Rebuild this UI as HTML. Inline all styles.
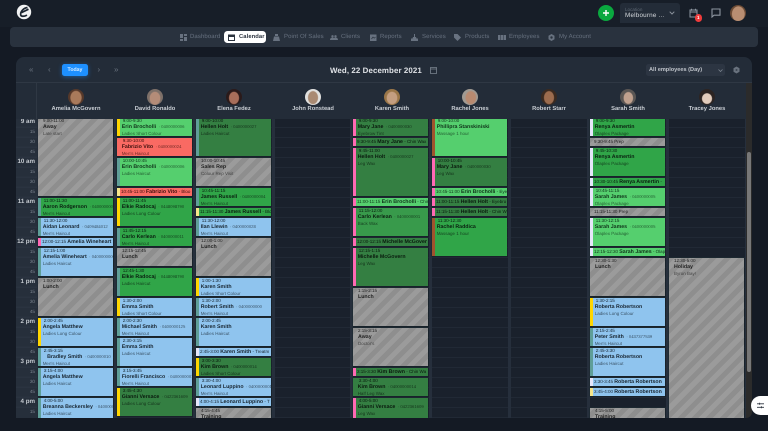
<!DOCTYPE html>
<html><head><meta charset="utf-8"><style>
*{box-sizing:border-box;margin:0;padding:0}
html,body{width:768px;height:431px;overflow:hidden;background:#141a24;font-family:"Liberation Sans",sans-serif;text-rendering:geometricPrecision}
.a{position:absolute}
#top{left:0;top:0;width:768px;height:27px;background:#171e28}
#nav{left:10px;top:27px;width:748px;height:19.5px;background:#29323e;border-radius:4px}
.n{position:absolute;top:33.5px;font-size:6px;line-height:7px;color:#687280;white-space:nowrap;letter-spacing:.1px}
.ni{position:absolute;top:33.5px;width:7px;height:7px}
#panel{left:16px;top:57px;width:736px;height:360.5px;background:#232c38;border-radius:8px;overflow:hidden}
.nm{position:absolute;top:106px;width:76px;text-align:center;font-size:5.8px;line-height:6px;font-weight:bold;color:#c9ced4;white-space:nowrap}
.av{position:absolute;top:89px;width:16px;height:16px;border-radius:50%}
.ar{position:absolute;top:65px;font-size:8px;line-height:9px;color:#69727e}
#grid{left:38px;top:119px;width:708px;height:298.5px;overflow:hidden;background:#262f3c}
.c{position:absolute;top:-1.3px;width:75.5px;height:320px;background:repeating-linear-gradient(to bottom,#1a212c 0 9px,#212935 9px 10px)}
.e{position:absolute;left:0;width:75px;overflow:hidden;white-space:nowrap;box-shadow:0 0 0 .6px rgba(20,40,40,.55);color:#15202a;font-size:4.5px;line-height:6.4px;padding-left:1.7px;text-indent:1px;border-left:3.3px solid #5f9e98}
.e b{display:block;font-size:5.25px;text-indent:0}
.e span{display:block;opacity:.72;text-indent:0}
.e s{text-decoration:none;font-weight:normal;font-size:4.2px;opacity:.75;margin-left:1px}
.e.i{line-height:8px;padding-left:1px;text-indent:0}
.e.i b{display:inline}
.e.i span{display:inline}
.L{background:#55cf6e;color:#10331a}.M{background:#30a548;color:#0a1f10}.D{background:#347f42;color:#0a1a0e}
.B{background:#8fc4ee;color:#182530}.R{background:#f96a63;color:#3a0f0c}
.G{background:repeating-linear-gradient(-45deg,#9b9b9b 0 5px,#8e8e8e 5px 10px);color:#222;border-left:0;padding-left:5px;text-indent:0}
.y{border-left-color:#ffd600}.p{border-left-color:#ff69b4}.q{border-left-color:#f5e58a}.v{border-left-color:#e6e6fa}.o{border-left-color:#a0522d}
.tm{position:absolute;right:717px;font-size:4.6px;line-height:8px;color:#7d8691;white-space:nowrap}
.tm.h{font-size:6.2px;font-weight:bold;color:#c4c9cf;right:717px}
#tc{left:16px;top:119px;width:21px;height:298.5px;background:repeating-linear-gradient(to bottom,#262f3b 0 9px,#2c3542 9px 10px);background-position:0 -1.3px}
</style></head><body>
<div class="a" id="top"></div>
<svg class="a" style="left:16px;top:4px" width="16" height="16" viewBox="0 0 16 16"><circle cx="8" cy="8" r="7.2" fill="#f2f3f4"/><path d="M11.5 3.5C7.5 4 4.5 7.5 4.6 10.5c.1 2.2 3 2.3 6.4.6M5.5 8.6l7-3.4" fill="none" stroke="#1c2530" stroke-width="1.7"/></svg>

<div class="a" style="left:598px;top:5px;width:16px;height:16px;border-radius:50%;background:#0aa83f"></div>
<svg class="a" style="left:602px;top:9px" width="8" height="8" viewBox="0 0 8 8"><path d="M4 1v6M1 4h6" stroke="#fff" stroke-width="1.4"/></svg>
<div class="a" style="left:620px;top:3px;width:60px;height:20px;background:#232c38;border-radius:3px 3px 0 0"></div>
<div class="a" style="left:625px;top:7px;font-size:4.6px;line-height:5px;color:#5f6975">Location</div>
<div class="a" style="left:625px;top:12px;font-size:6.3px;line-height:8px;color:#d4d8dc;white-space:nowrap;letter-spacing:.2px">Melbourne ...</div>
<svg class="a" style="left:669px;top:11px" width="6" height="4" viewBox="0 0 6 4"><path d="M.7.7 3 3 5.3.7" fill="none" stroke="#8a929c" stroke-width="1"/></svg>
<svg class="a" style="left:689px;top:8px" width="9" height="10" viewBox="0 0 9 10"><path d="M1 2h7v7H1zM1 4h7M2.5 .8v2M6.5 .8v2" fill="none" stroke="#8d95a0" stroke-width="1"/></svg>
<div class="a" style="left:694.5px;top:14px;width:7.5px;height:7.5px;border-radius:50%;background:#ef3b3b;color:#fff;font-size:4.5px;line-height:7.5px;text-align:center;font-weight:bold">1</div>
<svg class="a" style="left:711px;top:8px" width="10" height="10" viewBox="0 0 10 10"><path d="M1 1h8v6.2H3L1 9z" fill="none" stroke="#8d95a0" stroke-width="1.1"/></svg>
<div class="a" style="left:730px;top:5px;width:16px;height:16px;border-radius:50%;background:radial-gradient(ellipse 42% 50% at 52% 56%,#b98e72 0 90%,#6b4a34 100%)"></div>

<div class="a" id="nav"></div>
<div class="a" style="left:224px;top:30.5px;width:42px;height:12.5px;background:#fff;border-radius:3.5px"></div>

<svg class="ni" style="left:180px" viewBox="0 0 7 7"><path d="M0 0h3v4H0zM4 0h3v2H4zM4 3h3v4H4zM0 5h3v2H0z" fill="#687280"/></svg><div class="n" style="left:190px">Dashboard</div>
<svg class="ni" style="left:228px" viewBox="0 0 7 7"><path d="M.5 1h6v5.500h-6z" fill="none" stroke="#2a323d"/><path d="M.5 1h6v2h-6z" fill="#2a323d"/></svg><div class="n" style="left:239px;color:#2c3440;font-weight:bold;font-size:5.800px">Calendar</div>
<svg class="ni" style="left:273px" viewBox="0 0 7 7"><path d="M2 0h3v2H2zM1 2.500h5L7 7H0z" fill="#687280"/></svg><div class="n" style="left:284px">Point Of Sales</div>
<svg class="ni" style="left:330px;width:8px" viewBox="0 0 8 7"><circle cx="2.500" cy="2.300" r="1.200" fill="#687280"/><circle cx="5.500" cy="2.300" r="1.200" fill="#687280"/><path d="M0 6c0-2 1.500-2.500 2.500-2.500S4 4 4 4s.5-.5 1.500-.5S8 4 8 6z" fill="#687280"/></svg><div class="n" style="left:341px">Clients</div>
<svg class="ni" style="left:370px" viewBox="0 0 7 7"><path d="M0 .5h6.500V7H0z" fill="#687280"/><path d="M1.500 5l1.500-2 1.200 1.200L5.500 3" fill="none" stroke="#29323e" stroke-width=".7"/></svg><div class="n" style="left:380px">Reports</div>
<svg class="ni" style="left:411px" viewBox="0 0 7 7"><path d="M3 0h1v3H3zM2 3h3l.5 1.500H7V7H0V4.500h1.500z" fill="#687280"/></svg><div class="n" style="left:422px">Services</div>
<svg class="ni" style="left:454px" viewBox="0 0 7 7"><path d="M0 0h3.500L7 3.500 3.500 7 0 3.500z" fill="#687280"/></svg><div class="n" style="left:465px">Products</div>
<svg class="ni" style="left:498px;width:8px" viewBox="0 0 8 7"><path d="M0 1h8v5H0z" fill="#687280"/><path d="M2.700 1v5M5.300 1v5" stroke="#29323e" stroke-width=".5"/></svg><div class="n" style="left:509px">Employees</div>
<svg class="ni" style="left:548px" viewBox="0 0 7 7"><path d="M3.500 0l3 1.750v3.500L3.500 7 .5 5.250v-3.500z" fill="#687280"/><circle cx="3.500" cy="3.500" r="1.200" fill="#29323e"/></svg><div class="n" style="left:559px">My Account</div>

<div class="a" id="panel"></div>
<div class="a" style="left:16px;top:82px;width:736px;height:.8px;background:#2f3844"></div>
<div class="a" style="left:36px;top:83px;width:1px;height:36px;background:#2f3844"></div>
<div class="ar" style="left:29px">«</div><div class="ar" style="left:48px">‹</div>
<div class="a" style="left:62px;top:64px;width:26px;height:12px;background:#1e90ff;border-radius:2.500px;box-shadow:0 1px 5px rgba(30,144,255,.45);color:#d8ecff;font-size:5.200px;line-height:12px;text-align:center;font-weight:bold">Today</div>
<div class="ar" style="left:97.500px">›</div><div class="ar" style="left:114px">»</div>
<div class="a" style="left:330px;top:64.500px;font-size:7.900px;line-height:11px;font-weight:bold;color:#dfe2e6;white-space:nowrap;letter-spacing:.1px">Wed, 22 December 2021</div>
<svg class="a" style="left:430px;top:66px" width="7" height="8" viewBox="0 0 7 8"><path d="M.5 1.500h6v6h-6zM.5 3h6" fill="none" stroke="#7b848f" stroke-width=".8"/></svg>
<div class="a" style="left:646px;top:64px;width:79px;height:12px;background:#2c3542;border-radius:2.500px;color:#c0c5cb;font-size:5.600px;line-height:12px;padding-left:3px;font-weight:bold;white-space:nowrap">All employees (Day)</div>
<svg class="a" style="left:717.500px;top:68.500px" width="5" height="3" viewBox="0 0 5 3"><path d="M.5.500 2.500 2.500 4.500.500" fill="none" stroke="#7b848f" stroke-width=".8"/></svg>
<svg class="a" style="left:732.500px;top:66px" width="7" height="8" viewBox="0 0 7 8"><path d="M3.500 .5l3 1.700v3.600l-3 1.700-3-1.700V2.200z" fill="#69727e"/><circle cx="3.500" cy="4" r="1" fill="#3c4551"/></svg>

<div class="av" style="left:68px;background:radial-gradient(ellipse 38% 46% at 50% 54%,#a97a5b 0 85%,#55382a 100%)"></div>
<div class="av" style="left:147px;background:radial-gradient(ellipse 36% 44% at 50% 58%,#b48c78 0 85%,#7d7069 100%)"></div>
<div class="av" style="left:226px;background:radial-gradient(ellipse 34% 42% at 50% 56%,#a86e5a 0 85%,#2a1a1a 100%)"></div>
<div class="av" style="left:305px;background:radial-gradient(ellipse 34% 44% at 50% 54%,#a98a72 0 85%,#e0e0de 100%)"></div>
<div class="av" style="left:384px;background:radial-gradient(ellipse 36% 42% at 50% 56%,#c49e80 0 85%,#9a7648 100%)"></div>
<div class="av" style="left:462px;background:radial-gradient(ellipse 36% 44% at 55% 54%,#b88a70 0 85%,#a09a92 100%)"></div>
<div class="av" style="left:541px;background:radial-gradient(ellipse 34% 44% at 50% 54%,#9c6c4e 0 85%,#3a2a20 100%)"></div>
<div class="av" style="left:620px;background:radial-gradient(ellipse 32% 40% at 52% 56%,#bfa08e 0 85%,#5a5654 100%)"></div>
<div class="av" style="left:699px;background:radial-gradient(ellipse 34% 36% at 50% 60%,#e2ccbc 0 85%,#2c2422 100%)"></div>
<div class="nm" style="left:38px">Amelia McGovern</div>
<div class="nm" style="left:117px">David Ronaldo</div>
<div class="nm" style="left:196px">Elena Fedez</div>
<div class="nm" style="left:275px">John Ronstead</div>
<div class="nm" style="left:354px">Karen Smith</div>
<div class="nm" style="left:432px">Rachel Jones</div>
<div class="nm" style="left:511px">Robert Starr</div>
<div class="nm" style="left:590px">Sarah Smith</div>
<div class="nm" style="left:669px">Tracey Jones</div>

<div class="a" id="tc"></div>
<div class="a" style="left:0;top:119px;width:752px;height:298.500px;overflow:hidden">
<div class="tm h" style="top:-1.300px">9 am</div><div class="tm" style="top:8.700px">15</div><div class="tm" style="top:18.700px">30</div><div class="tm" style="top:28.700px">45</div>
<div class="tm h" style="top:38.700px">10 am</div><div class="tm" style="top:48.700px">15</div><div class="tm" style="top:58.700px">30</div><div class="tm" style="top:68.700px">45</div>
<div class="tm h" style="top:78.700px">11 am</div><div class="tm" style="top:88.700px">15</div><div class="tm" style="top:98.700px">30</div><div class="tm" style="top:108.700px">45</div>
<div class="tm h" style="top:118.700px">12 pm</div><div class="tm" style="top:128.700px">15</div><div class="tm" style="top:138.700px">30</div><div class="tm" style="top:148.700px">45</div>
<div class="tm h" style="top:158.700px">1 pm</div><div class="tm" style="top:168.700px">15</div><div class="tm" style="top:178.700px">30</div><div class="tm" style="top:188.700px">45</div>
<div class="tm h" style="top:198.700px">2 pm</div><div class="tm" style="top:208.700px">15</div><div class="tm" style="top:218.700px">30</div><div class="tm" style="top:228.700px">45</div>
<div class="tm h" style="top:238.700px">3 pm</div><div class="tm" style="top:248.700px">15</div><div class="tm" style="top:258.700px">30</div><div class="tm" style="top:268.700px">45</div>
<div class="tm h" style="top:278.700px">4 pm</div><div class="tm" style="top:288.700px">15</div>
</div>

<div class="a" id="grid">
<div class="c" style="left:0">
<div class="e G" style="top:0;height:78.500px">9:00-11:00<b>Away</b><span>Late start</span></div>
<div class="e M" style="top:80px;height:18.500px">11:00-11:30<b>Aaron Rodgerson <s>· 04000000000</s></b><span>Men's Haircut</span></div>
<div class="e B" style="top:100px;height:18.500px">11:30-12:00<b>Aidan Leonard <s>· 0409484012</s></b><span>Men's Haircut</span></div>
<div class="e B i p" style="top:120px;height:8.500px">12:00-12:15 <b>Amelia Wineheart</b></div>
<div class="e B" style="top:130px;height:28.500px">12:15-1:00<b>Amelia Wineheart <s>· 04000000000</s></b><span>Ladies Haircut</span></div>
<div class="e G" style="top:160px;height:38.500px">1:00-2:00<b>Lunch</b></div>
<div class="e B y" style="top:200px;height:28.500px">2:00-2:45<b>Angela Matthew</b><span>Ladies Long Colour</span></div>
<div class="e B" style="top:230px;height:18.500px">2:45-3:15<b>&nbsp;&nbsp;&nbsp;Bradley Smith <s>· 0400000010</s></b><span>Men's Haircut</span></div>
<div class="e B" style="top:250px;height:28.500px">3:15-4:00<b>Angela Matthew</b><span>Ladies Haircut</span></div>
<div class="e B" style="top:280px;height:38.500px">4:00-5:00<b>Breanna Beckersley <s>· 04000000</s></b><span>Ladies Haircut</span></div>
</div>
<div class="c" style="left:79px">
<div class="e L y" style="top:0;height:18.500px">9:00-9:30<b>Erin Brocholli <s>· 0400000006</s></b><span>Ladies Short Colour</span></div>
<div class="e R" style="top:20px;height:18.500px;border-left-color:#f96a63">9:30-10:00<b>Fabrizio Vito <s>· 0400000024</s></b><span>Men's Haircut</span></div>
<div class="e L" style="top:40px;height:28.500px">10:00-10:45<b>Erin Brocholli <s>· 0400000006</s></b><span>Ladies Haircut</span></div>
<div class="e R i q" style="top:70px;height:8.500px">10:45-11:00 <b>Fabrizio Vito</b> - Bloo</div>
<div class="e M y" style="top:80px;height:28.500px">11:00-11:45<b>Elkie Radocaj <s>· 0448098790</s></b><span>Ladies Long Colour</span></div>
<div class="e M" style="top:110px;height:18.500px">11:45-12:15<b>Carlo Kerlean <s>· 0400000011</s></b><span>Men's Haircut</span></div>
<div class="e G" style="top:130px;height:18.500px">12:15-12:45<b>Lunch</b></div>
<div class="e M" style="top:150px;height:28.500px">12:45-1:30<b>Elkie Radocaj <s>· 0448098790</s></b><span>Ladies Haircut</span></div>
<div class="e B y" style="top:180px;height:18.500px">1:30-2:00<b>Emma Smith</b><span>Ladies Short Colour</span></div>
<div class="e B" style="top:200px;height:18.500px">2:00-2:30<b>Michael Smith <s>· 0400000125</s></b><span>Men's Haircut</span></div>
<div class="e B" style="top:220px;height:28.500px">2:30-3:15<b>Emma Smith</b><span>Ladies Haircut</span></div>
<div class="e B" style="top:250px;height:18.500px">3:15-3:45<b>Fiorelli Francisco <s>· 0400000001</s></b><span>Men's Haircut</span></div>
<div class="e D y" style="top:270px;height:28.500px">3:45-4:30<b>Gianni Versace <s>· 0422361609</s></b><span>Ladies Long Colour</span></div>
</div>
<div class="c" style="left:158px">
<div class="e D" style="top:0;height:38.500px">9:00-10:00<b>Hellen Holt <s>· 0400000027</s></b><span>Ladies Haircut</span></div>
<div class="e G" style="top:40px;height:28.500px">10:00-10:45<b>Sales Rep</b><span>Colour Rep Visit</span></div>
<div class="e M" style="top:70px;height:18.500px">10:45-11:15<b>James Russell <s>· 0400000004</s></b><span>Men's Haircut</span></div>
<div class="e M i q" style="top:90px;height:8.500px">11:15-11:30 <b>James Russell</b> - Blo</div>
<div class="e B" style="top:100px;height:18.500px">11:30-12:00<b>Ilan Llewin <s>· 0400000028</s></b><span>Men's Haircut</span></div>
<div class="e G" style="top:120px;height:38.500px">12:00-1:00<b>Lunch</b></div>
<div class="e B y" style="top:160px;height:18.500px">1:00-1:30<b>Karen Smith</b><span>Ladies Short Colour</span></div>
<div class="e B" style="top:180px;height:18.500px">1:30-2:00<b>Robert Smith <s>· 0400000000</s></b><span>Men's Haircut</span></div>
<div class="e B" style="top:200px;height:28.500px">2:00-2:45<b>Karen Smith</b><span>Ladies Haircut</span></div>
<div class="e B i v" style="top:230px;height:8.500px">2:45-3:00 <b>Karen Smith</b> - Treatm</div>
<div class="e D y" style="top:240px;height:18.500px">3:00-3:30<b>Kim Brown <s>· 0400000014</s></b><span>Ladies Short Colour</span></div>
<div class="e B" style="top:260px;height:18.500px">3:30-4:00<b>Leonard Luppino <s>· 0400000001</s></b><span>Men's Haircut</span></div>
<div class="e B i v" style="top:280px;height:8.500px">4:00-4:15 <b>Leonard Luppino</b> - T</div>
<div class="e G" style="top:290px;height:28.500px">4:15-4:45<b>Training</b></div>
</div>
<div class="c" style="left:236.500px"></div>
<div class="c" style="left:315px">
<div class="e D p" style="top:0;height:18.500px">9:00-9:30<b>Mary Jane <s>· 0400000030</s></b><span>Eyebrow Tint</span></div>
<div class="e D i p" style="top:20px;height:8.500px">9:30-9:45 <b>Mary Jane</b> - Chin Wax</div>
<div class="e D p" style="top:30px;height:48.500px">9:45-11:00<b>Hellen Holt <s>· 0400000027</s></b><span>Leg Wax</span></div>
<div class="e L i p" style="top:80px;height:8.500px">11:00-11:15 <b>Erin Brocholli</b> - Chin</div>
<div class="e M p" style="top:90px;height:28.500px;background:#389a4b">11:15-12:00<b>Carlo Kerlean <s>· 0400000001</s></b><span>Back Wax</span></div>
<div class="e D i p" style="top:120px;height:8.500px">12:00-12:15 <b>Michelle McGover</b></div>
<div class="e D p" style="top:130px;height:38.500px">12:15-1:15<b>Michelle McGovern</b><span>Leg Wax</span></div>
<div class="e G" style="top:170px;height:38.500px">1:15-2:15<b>Lunch</b></div>
<div class="e G" style="top:210px;height:38.500px">2:15-3:15<b>Away</b><span>Doctor's</span></div>
<div class="e D i p" style="top:250px;height:8.500px">3:15-3:30 <b>Kim Brown</b> - Chin Wa</div>
<div class="e D" style="top:260px;height:18.500px;border-left-color:#347f42">3:30-4:00<b>Kim Brown <s>· 04000000014</s></b><span>Half Leg Wax</span></div>
<div class="e D p" style="top:280px;height:38.500px">4:00-5:00<b>Gianni Versace <s>· 0422361609</s></b><span>Leg Wax</span></div>
</div>
<div class="c" style="left:394px">
<div class="e L o" style="top:0;height:38.500px">9:00-10:00<b>Phillipra Stanskiniski</b><span>Massage 1 hour</span></div>
<div class="e D p" style="top:40px;height:28.500px">10:00-10:45<b>Mary Jane <s>· 0400000030</s></b><span>Leg Wax</span></div>
<div class="e L i p" style="top:70px;height:8.500px">10:45-11:00 <b>Erin Brocholli</b> - Eye</div>
<div class="e D i p" style="top:80px;height:8.500px">11:00-11:15 <b>Hellen Holt</b> - Eyebro</div>
<div class="e D i p" style="top:90px;height:8.500px">11:15-11:30 <b>Hellen Holt</b> - Chin W</div>
<div class="e M o" style="top:100px;height:38.500px">11:30-12:30<b>Rachel Raddica</b><span>Massage 1 hour</span></div>
</div>
<div class="c" style="left:473px"></div>
<div class="c" style="left:552px">
<div class="e M v" style="top:0;height:18.500px">9:00-9:30<b>Renya Asmertin</b><span>Olaplex Package</span></div>
<div class="e G i" style="top:20px;height:8.500px;padding-left:4px">9:30-9:45 Prep</div>
<div class="e M v" style="top:30px;height:28.500px">9:45-10:30<b>Renya Asmertin</b><span>Olaplex Package</span></div>
<div class="e M i v" style="top:60px;height:8.500px">10:30-10:45 <b>Renya Asmertin</b> -</div>
<div class="e L v" style="top:70px;height:18.500px">10:45-11:15<b>Sarah James <s>· 0400000005</s></b><span>Olaplex Package</span></div>
<div class="e G i" style="top:90px;height:8.500px;padding-left:4px">11:15-11:30 Prep</div>
<div class="e L v" style="top:100px;height:28.500px">11:30-12:15<b>Sarah James <s>· 0400000005</s></b><span>Olaplex Package</span></div>
<div class="e L i v" style="top:130px;height:8.500px">12:15-12:30 <b>Sarah James</b> - Olap</div>
<div class="e G" style="top:140px;height:38.500px">12:30-1:30<b>Lunch</b></div>
<div class="e B y" style="top:180px;height:28.500px">1:30-2:15<b>Roberta Robertson</b><span>Ladies Long Colour</span></div>
<div class="e B" style="top:210px;height:18.500px">2:15-2:45<b>Peter Smith <s>· 0437377539</s></b><span>Men's Haircut</span></div>
<div class="e B" style="top:230px;height:28.500px">2:45-3:30<b>Roberta Robertson</b><span>Ladies Haircut</span></div>
<div class="e B i v" style="top:260px;height:8.500px">3:30-3:45 <b>Roberta Robertson</b></div>
<div class="e B i q" style="top:270px;height:8.500px">3:45-4:00 <b>Roberta Robertson</b></div>
<div class="e G" style="top:290px;height:28.500px">4:15-5:00<b>Training</b></div>
</div>
<div class="c" style="left:631px">
<div class="e G" style="top:140px;height:178.500px">12:30-5:00<b>Holiday</b><span>Byron Bay!</span></div>
</div>
</div>

<div class="a" style="left:746px;top:83px;width:6px;height:334.500px;background:#2b2b2b;border-radius:0 0 6px 0"></div>
<div class="a" style="left:747px;top:152px;width:4px;height:220px;background:#777;border-radius:2px"></div>

<div class="a" style="left:750.500px;top:396px;width:26px;height:19px;background:#fff;border-radius:9.500px"></div>
<svg class="a" style="left:756.500px;top:401.500px" width="7" height="7" viewBox="0 0 8 8"><path d="M0 2h8M0 6h8M3 .8v2.400M5 4.800v2.400" stroke="#2a323d" stroke-width="1"/></svg>
</body></html>
